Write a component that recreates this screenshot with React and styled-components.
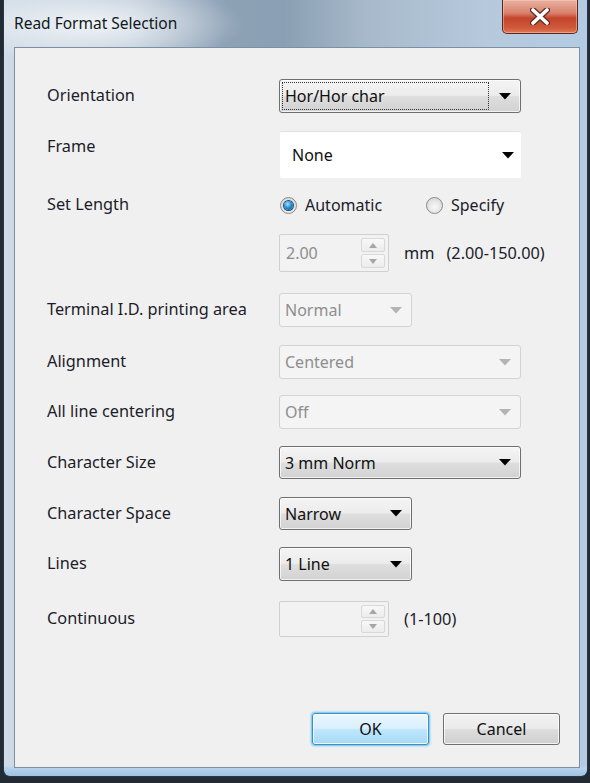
import styled, { createGlobalStyle } from "styled-components";

const GlobalStyle = createGlobalStyle`
  html, body {
    margin: 0;
    padding: 0;
    background: #222a33;
  }
  * {
    box-sizing: border-box;
  }
`;

const Window = styled.div`
  width: 585px;
  height: 777px;
  margin-left: 3px;
  display: flex;
  flex-direction: column;
  border: 1px solid #2a3644;
  border-top: none;
  border-radius: 0 0 7px 7px;
  overflow: hidden;
  background:
    linear-gradient(0deg, #9fc1e2 0px, #b7d3ee 8px, rgba(183, 211, 238, 0) 10px),
    radial-gradient(ellipse 150px 40px at 90px 24px, rgba(255, 255, 255, 0.75), rgba(255, 255, 255, 0) 100%),
    linear-gradient(90deg, #cfdbe6 0%, #bccad8 22%, #8ea2b6 38%, #8a9fb3 48%, #a7b9ca 62%, #b6c9dc 82%, #b3cbe3 100%);
  font-family: "Noto Sans", "Open Sans", "DejaVu Sans", sans-serif;
`;

const TitleBar = styled.div`
  height: 47px;
  display: flex;
  justify-content: space-between;
  padding-left: 10px;
  padding-right: 9px;
  flex: none;
`;

const Title = styled.div`
  align-self: center;
  margin-top: -1px;
  font-size: 15.5px;
  color: #101820;
`;

const CloseButton = styled.div`
  width: 76px;
  height: 34px;
  display: flex;
  align-items: center;
  justify-content: center;
  border: 1px solid #5a2620;
  border-top: none;
  border-radius: 0 0 5px 5px;
  background: linear-gradient(180deg, #e9b1a3 0%, #d8806a 40%, #c3442b 55%, #cf5a3c 85%, #e07a55 100%);
  box-shadow: inset 0 0 0 1px rgba(255, 210, 190, 0.45);
`;

const Client = styled.div`
  flex: 1;
  margin: 0 7px 8px 10px;
  border: 1px solid #7d8fa2;
  background: #f0f0f0;
  padding: 31px 19px 0 32px;
  display: flex;
  flex-direction: column;
`;

const Row = styled.div`
  display: flex;
  align-items: ${(p) => p.$align || "center"};
  height: ${(p) => p.$h}px;
  margin-top: ${(p) => p.$mt || 0}px;
  flex: none;
`;

const Label = styled.div`
  width: 232px;
  flex: none;
  font-size: 16.3px;
  line-height: 22px;
  color: #1c1c2a;
  padding-top: ${(p) => p.$pt || 0}px;
  margin-top: -2px;
`;

const Combo = styled.div`
  width: ${(p) => p.$w}px;
  height: 100%;
  position: relative;
  display: flex;
  align-items: center;
  justify-content: space-between;
  padding: 0 9px 0 5px;
  font-size: 16px;
  color: ${(p) => (p.$disabled ? "#8e8e8e" : "#101010")};
  border-radius: 3px;
  border: 1px solid ${(p) => (p.$disabled ? "#d3d3d3" : "#6f6f6f")};
  background: ${(p) =>
    p.$disabled
      ? "#f4f4f4"
      : "linear-gradient(180deg, #f4f4f4 0%, #ececec 48%, #dedede 52%, #d2d2d2 100%)"};
  box-shadow: ${(p) => (p.$disabled ? "none" : "inset 0 0 0 1px rgba(255,255,255,0.7)")};
`;

const FocusRing = styled.div`
  position: absolute;
  left: 2px;
  top: 2px;
  bottom: 2px;
  right: 31px;
  border: 1px dotted #333;
  pointer-events: none;
`;

const FlatCombo = styled.div`
  width: 241px;
  height: 100%;
  margin-left: 1px;
  display: flex;
  align-items: center;
  justify-content: space-between;
  padding: 0 7px 0 12px;
  font-size: 16px;
  color: #101010;
  background: #ffffff;
  border-top: 1px solid #e2e2e2;
  border-radius: 2px;
`;

const Arrow = ({ color = "#000" }) => (
  <svg width="12" height="7" viewBox="0 0 12 7">
    <polygon points="0,0 12,0 6,6.5" fill={color} />
  </svg>
);

const RadioGroup = styled.div`
  display: flex;
  align-items: center;
`;

const RadioItem = styled.div`
  display: flex;
  align-items: center;
  width: ${(p) => p.$w || "auto"};
  font-size: 16px;
  color: #1c1c2a;
  gap: 8px;
`;

const RadioDot = styled.span`
  width: 17px;
  height: 17px;
  margin-left: 1px;
  border-radius: 50%;
  border: 1px solid #8a8a8a;
  background: radial-gradient(circle at 50% 60%, #f8f8f8 0%, #e4e4e4 55%, #c9c9c9 100%);
  display: flex;
  align-items: center;
  justify-content: center;

  &::after {
    content: "";
    display: ${(p) => (p.$checked ? "block" : "none")};
    width: 9px;
    height: 9px;
    border-radius: 50%;
    background: radial-gradient(circle at 40% 35%, #a8e4ff 0%, #2a8fd4 45%, #0b4f8a 100%);
    box-shadow: 0 0 0 1px #1b4e78;
  }
`;

const Spin = styled.div`
  width: 110px;
  height: 100%;
  display: flex;
  align-items: center;
  justify-content: space-between;
  padding: 3px 3px 3px 6px;
  border: 1px solid #d0d0d0;
  border-radius: 2px;
  background: #f2f2f2;
  font-size: 16px;
  color: #8e8e8e;
`;

const SpinButtons = styled.div`
  width: 24px;
  height: 100%;
  display: flex;
  flex-direction: column;
  gap: 2px;
`;

const SpinButton = styled.div`
  flex: 1;
  display: flex;
  align-items: center;
  justify-content: center;
  border: 1px solid #d8d8d8;
  border-radius: 2px;
  background: linear-gradient(180deg, #f8f8f8, #ececec);
`;

const Hint = styled.div`
  margin-left: 15px;
  display: flex;
  gap: 12px;
  font-size: 16.3px;
  color: #1c1c2a;
`;

const ButtonBar = styled.div`
  display: flex;
  justify-content: flex-end;
  gap: 14px;
  margin-top: 76px;
  height: 32px;
`;

const Button = styled.div`
  width: 117px;
  height: 32px;
  display: flex;
  align-items: center;
  justify-content: center;
  font-size: 16px;
  color: #101010;
  border-radius: 3px;
  border: 1px solid ${(p) => (p.$primary ? "#3c8ec8" : "#707070")};
  background: ${(p) =>
    p.$primary
      ? "linear-gradient(180deg, #eaf6fd 0%, #d9f0fc 48%, #bee6fd 52%, #a7d9f5 100%)"
      : "linear-gradient(180deg, #f2f2f2 0%, #ebebeb 48%, #dddddd 52%, #cfcfcf 100%)"};
  box-shadow: ${(p) =>
    p.$primary
      ? "0 0 2px 1px #62c4f0, inset 0 0 0 1px rgba(255,255,255,0.8)"
      : "inset 0 0 0 1px rgba(255,255,255,0.75)"};
`;

const SpinArrow = ({ up }) => (
  <svg width="8" height="5" viewBox="0 0 8 5">
    <polygon points={up ? "0,5 8,5 4,0" : "0,0 8,0 4,5"} fill="#a6a6a6" />
  </svg>
);

const SpinBox = ({ value }) => (
  <Spin>
    <span>{value}</span>
    <SpinButtons>
      <SpinButton>
        <SpinArrow up />
      </SpinButton>
      <SpinButton>
        <SpinArrow />
      </SpinButton>
    </SpinButtons>
  </Spin>
);

const Select = ({ value, width, disabled, focused }) => (
  <Combo $w={width} $disabled={disabled}>
    {focused && <FocusRing />}
    <span>{value}</span>
    <Arrow color={disabled ? "#b4b4b4" : "#000"} />
  </Combo>
);

const App = () => {
  return (
    <>
      <GlobalStyle />
      <Window>
        <TitleBar>
          <Title>Read Format Selection</Title>
          <CloseButton>
            <svg width="20" height="17" viewBox="0 0 20 17">
              <path
                d="M3 2 L17 15 M17 2 L3 15"
                stroke="#5b2a24"
                strokeWidth="6"
                strokeLinecap="round"
              />
              <path
                d="M3 2 L17 15 M17 2 L3 15"
                stroke="#ffffff"
                strokeWidth="3.6"
                strokeLinecap="round"
              />
            </svg>
          </CloseButton>
        </TitleBar>
        <Client>
          <Row $h={34}>
            <Label>Orientation</Label>
            <Select value="Hor/Hor char" width={242} focused />
          </Row>
          <Row $h={47} $mt={18} $align="flex-start">
            <Label $pt={6}>Frame</Label>
            <FlatCombo>
              <span>None</span>
              <Arrow />
            </FlatCombo>
          </Row>
          <Row $h={28} $mt={13}>
            <Label>Set Length</Label>
            <RadioGroup>
              <RadioItem $w="146px">
                <RadioDot $checked />
                Automatic
              </RadioItem>
              <RadioItem>
                <RadioDot />
                Specify
              </RadioItem>
            </RadioGroup>
          </Row>
          <Row $h={38} $mt={15}>
            <Label />
            <SpinBox value="2.00" />
            <Hint>
              <span>mm</span>
              <span>(2.00-150.00)</span>
            </Hint>
          </Row>
          <Row $h={34} $mt={21}>
            <Label>Terminal I.D. printing area</Label>
            <Select value="Normal" width={133} disabled />
          </Row>
          <Row $h={34} $mt={18}>
            <Label>Alignment</Label>
            <Select value="Centered" width={242} disabled />
          </Row>
          <Row $h={34} $mt={16}>
            <Label>All line centering</Label>
            <Select value="Off" width={242} disabled />
          </Row>
          <Row $h={33} $mt={17}>
            <Label>Character Size</Label>
            <Select value="3 mm Norm" width={242} />
          </Row>
          <Row $h={33} $mt={18}>
            <Label>Character Space</Label>
            <Select value="Narrow" width={133} />
          </Row>
          <Row $h={34} $mt={17}>
            <Label>Lines</Label>
            <Select value="1 Line" width={133} />
          </Row>
          <Row $h={36} $mt={20}>
            <Label>Continuous</Label>
            <SpinBox value="" />
            <Hint>
              <span>(1-100)</span>
            </Hint>
          </Row>
          <ButtonBar>
            <Button $primary>OK</Button>
            <Button>Cancel</Button>
          </ButtonBar>
        </Client>
      </Window>
    </>
  );
};

export default App;
